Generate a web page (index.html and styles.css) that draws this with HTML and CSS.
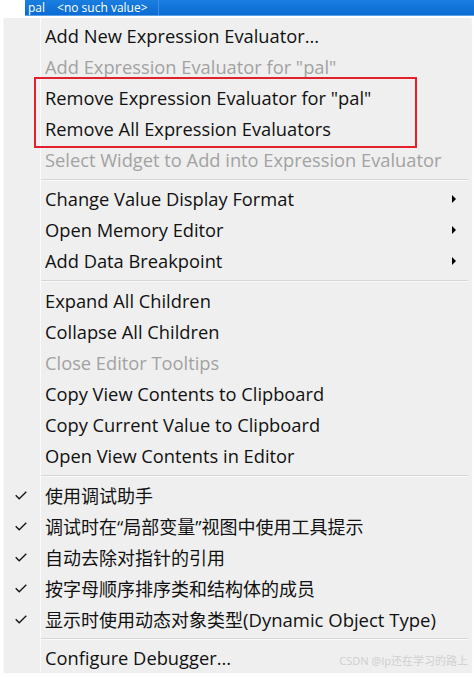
FILE: index.html
```html
<!DOCTYPE html>
<html>
<head>
<meta charset="utf-8">
<link rel="stylesheet" href="styles.css">
</head>
<body>
<div class="watchbar"><span class="var">pal</span><span class="val">&lt;no such value&gt;</span><span class="divider"></span></div>
<div class="menu">
  <div class="item"><span class="gutter"></span><span class="label">Add New Expression Evaluator...</span></div>
  <div class="item disabled"><span class="gutter"></span><span class="label">Add Expression Evaluator for "pal"</span></div>
  <div class="highlight">
    <div class="item"><span class="gutter"></span><span class="label">Remove Expression Evaluator for "pal"</span></div>
    <div class="item"><span class="gutter"></span><span class="label">Remove All Expression Evaluators</span></div>
  </div>
  <div class="item disabled"><span class="gutter"></span><span class="label">Select Widget to Add into Expression Evaluator</span></div>
  <div class="sep"></div>
  <div class="item"><span class="gutter"></span><span class="label">Change Value Display Format</span><span class="arrow"></span></div>
  <div class="item"><span class="gutter"></span><span class="label">Open Memory Editor</span><span class="arrow"></span></div>
  <div class="item"><span class="gutter"></span><span class="label">Add Data Breakpoint</span><span class="arrow"></span></div>
  <div class="sep wide"></div>
  <div class="item"><span class="gutter"></span><span class="label">Expand All Children</span></div>
  <div class="item"><span class="gutter"></span><span class="label">Collapse All Children</span></div>
  <div class="item disabled"><span class="gutter"></span><span class="label">Close Editor Tooltips</span></div>
  <div class="item"><span class="gutter"></span><span class="label">Copy View Contents to Clipboard</span></div>
  <div class="item"><span class="gutter"></span><span class="label">Copy Current Value to Clipboard</span></div>
  <div class="item"><span class="gutter"></span><span class="label">Open View Contents in Editor</span></div>
  <div class="sep"></div>
  <div class="item"><span class="gutter"><svg class="check" width="12" height="9" viewBox="0 0 12 9"><polyline points="0.7,4.2 4.2,7.8 11.3,0.7" fill="none" stroke="#111" stroke-width="1.3"/></svg></span><span class="label cjk">使用调试助手</span></div>
  <div class="item"><span class="gutter"><svg class="check" width="12" height="9" viewBox="0 0 12 9"><polyline points="0.7,4.2 4.2,7.8 11.3,0.7" fill="none" stroke="#111" stroke-width="1.3"/></svg></span><span class="label cjk">调试时在“局部变量”视图中使用工具提示</span></div>
  <div class="item"><span class="gutter"><svg class="check" width="12" height="9" viewBox="0 0 12 9"><polyline points="0.7,4.2 4.2,7.8 11.3,0.7" fill="none" stroke="#111" stroke-width="1.3"/></svg></span><span class="label cjk">自动去除对指针的引用</span></div>
  <div class="item"><span class="gutter"><svg class="check" width="12" height="9" viewBox="0 0 12 9"><polyline points="0.7,4.2 4.2,7.8 11.3,0.7" fill="none" stroke="#111" stroke-width="1.3"/></svg></span><span class="label cjk">按字母顺序排序类和结构体的成员</span></div>
  <div class="item"><span class="gutter"><svg class="check" width="12" height="9" viewBox="0 0 12 9"><polyline points="0.7,4.2 4.2,7.8 11.3,0.7" fill="none" stroke="#111" stroke-width="1.3"/></svg></span><span class="label cjk">显示时使用动态对象类型<span class="latin">(Dynamic Object Type)</span></span></div>
  <div class="sep"></div>
  <div class="item"><span class="gutter"></span><span class="label">Configure Debugger...</span></div>
  <div class="watermark">CSDN @lp还在学习的路上</div>
</div>
</body>
</html>
```

FILE: styles.css
```css
html, body {
  margin: 0;
  padding: 0;
  background: #ffffff;
}
body {
  width: 474px;
  height: 677px;
  overflow: hidden;
  font-family: "Open Sans", "Noto Sans CJK SC", sans-serif;
}
.watchbar {
  margin-left: 25px;
  height: 15px;
  background: linear-gradient(#1a7ee0, #0b6bd3);
  border-bottom: 1px solid #5aa0e6;
  color: #ffffff;
  font-size: 12px;
  line-height: 14px;
  display: flex;
  align-items: center;
  position: relative;
}
.watchbar .var {
  margin-left: 3px;
}
.watchbar .val {
  margin-left: 12px;
}
.watchbar .divider {
  position: absolute;
  left: 133px;
  top: 0;
  bottom: 0;
  width: 1px;
  background: #3c8fe3;
}
.menu {
  position: relative;
  margin-top: 2px;
  margin-left: 3px;
  width: 468px;
  height: 654px;
  box-sizing: border-box;
  padding-top: 2px;
  background: linear-gradient(to right, #efefef 36px, #fbfbfb 36px, #fbfbfb 37px, #efefef 37px);
  border-left: 1px solid #f7f7f7;
  box-shadow: 1px 1px 1px rgba(0,0,0,0.06);
}
.item {
  display: flex;
  align-items: center;
  height: 31px;
  font-size: 18.3px;
  color: #111111;
  white-space: nowrap;
}
.item.disabled {
  color: #a2a2a2;
}
.gutter {
  width: 40px;
  flex: none;
  display: flex;
  align-items: center;
  justify-content: center;
  padding-right: 2px;
  box-sizing: border-box;
}
.check {
  display: block;
  margin-left: -5px;
  margin-top: 1px;
}
.label {
  flex: 1;
  padding-left: 1px;
}
.label.cjk {
  font-size: 18px;
}
.label .latin {
  font-size: 18.5px;
}
.arrow {
  flex: none;
  width: 0;
  height: 0;
  border-top: 4px solid transparent;
  border-bottom: 4px solid transparent;
  border-left: 4px solid #000000;
  margin-right: 15px;
}
.sep {
  height: 8px;
  display: flex;
  align-items: center;
  margin-left: 37px;
  margin-right: 3px;
}
.sep.wide {
  height: 9px;
}
.sep::before {
  content: "";
  flex: 1;
  height: 1px;
  background: #d6d6d6;
  box-shadow: 0 1px 0 #fafafa;
}
.highlight {
  position: relative;
}
.highlight::after {
  content: "";
  position: absolute;
  top: -5px;
  bottom: -4px;
  left: 30px;
  width: 383px;
  border: 2px solid #e3202b;
  box-sizing: border-box;
}
.watermark {
  position: absolute;
  right: 3px;
  bottom: 4px;
  font-size: 11px;
  color: #cfcfcf;
  font-family: "Noto Sans", "Noto Sans CJK SC", sans-serif;
}
```
